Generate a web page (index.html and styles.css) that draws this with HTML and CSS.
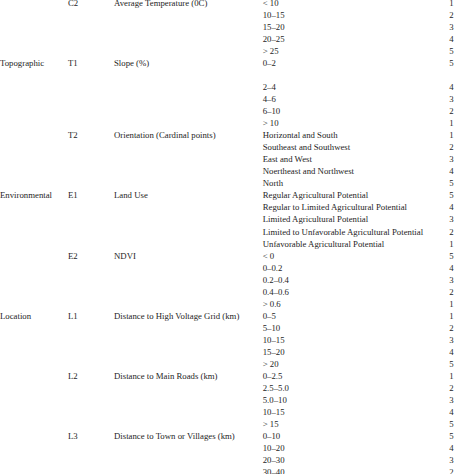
FILE: index.html
```html
<!DOCTYPE html>
<html>
<head>
<meta charset="utf-8">
<link rel="stylesheet" href="styles.css">
</head>
<body>
<div class="tbl">
  <span></span><span>C2</span><span>Average Temperature (0C)</span><span>&lt; 10</span><span>1</span>
  <span></span><span></span><span></span><span>10–15</span><span>2</span>
  <span></span><span></span><span></span><span>15–20</span><span>3</span>
  <span></span><span></span><span></span><span>20–25</span><span>4</span>
  <span></span><span></span><span></span><span>&gt; 25</span><span>5</span>
  <span>Topographic</span><span>T1</span><span>Slope (%)</span><span>0–2</span><span>5</span>
  <span></span><span></span><span></span><span></span><span></span>
  <span></span><span></span><span></span><span>2–4</span><span>4</span>
  <span></span><span></span><span></span><span>4–6</span><span>3</span>
  <span></span><span></span><span></span><span>6–10</span><span>2</span>
  <span></span><span></span><span></span><span>&gt; 10</span><span>1</span>
  <span></span><span>T2</span><span>Orientation (Cardinal points)</span><span>Horizontal and South</span><span>1</span>
  <span></span><span></span><span></span><span>Southeast and Southwest</span><span>2</span>
  <span></span><span></span><span></span><span>East and West</span><span>3</span>
  <span></span><span></span><span></span><span>Noertheast and Northwest</span><span>4</span>
  <span></span><span></span><span></span><span>North</span><span>5</span>
  <span>Environmental</span><span>E1</span><span>Land Use</span><span>Regular Agricultural Potential</span><span>5</span>
  <span></span><span></span><span></span><span>Regular to Limited Agricultural Potential</span><span>4</span>
  <span></span><span></span><span></span><span>Limited Agricultural Potential</span><span>3</span>
  <span></span><span></span><span></span><span>Limited to Unfavorable Agricultural Potential</span><span>2</span>
  <span></span><span></span><span></span><span>Unfavorable Agricultural Potential</span><span>1</span>
  <span></span><span>E2</span><span>NDVI</span><span>&lt; 0</span><span>5</span>
  <span></span><span></span><span></span><span>0–0.2</span><span>4</span>
  <span></span><span></span><span></span><span>0.2–0.4</span><span>3</span>
  <span></span><span></span><span></span><span>0.4–0.6</span><span>2</span>
  <span></span><span></span><span></span><span>&gt; 0.6</span><span>1</span>
  <span>Location</span><span>L1</span><span>Distance to High Voltage Grid (km)</span><span>0–5</span><span>1</span>
  <span></span><span></span><span></span><span>5–10</span><span>2</span>
  <span></span><span></span><span></span><span>10–15</span><span>3</span>
  <span></span><span></span><span></span><span>15–20</span><span>4</span>
  <span></span><span></span><span></span><span>&gt; 20</span><span>5</span>
  <span></span><span>L2</span><span>Distance to Main Roads (km)</span><span>0–2.5</span><span>1</span>
  <span></span><span></span><span></span><span>2.5–5.0</span><span>2</span>
  <span></span><span></span><span></span><span>5.0–10</span><span>3</span>
  <span></span><span></span><span></span><span>10–15</span><span>4</span>
  <span></span><span></span><span></span><span>&gt; 15</span><span>5</span>
  <span></span><span>L3</span><span>Distance to Town or Villages (km)</span><span>0–10</span><span>5</span>
  <span></span><span></span><span></span><span>10–20</span><span>4</span>
  <span></span><span></span><span></span><span>20–30</span><span>3</span>
  <span></span><span></span><span></span><span>30–40</span><span>2</span>
</div>
</body>
</html>
```

FILE: styles.css
```css
html, body {
  margin: 0;
  padding: 0;
  background: #ffffff;
  overflow: hidden;
}
body {
  width: 474px;
  height: 474px;
  font-family: "Liberation Serif", "Times New Roman", serif;
  font-size: 8.75px;
  color: #1e1e1e;
}
.tbl {
  display: grid;
  grid-template-columns: 68px 46px 148.7px 186.6px 1fr;
  grid-auto-rows: 12.05px;
  line-height: 12.05px;
  margin-top: -3.4px;
  white-space: nowrap;
}
.tbl span {
  display: block;
}
```
